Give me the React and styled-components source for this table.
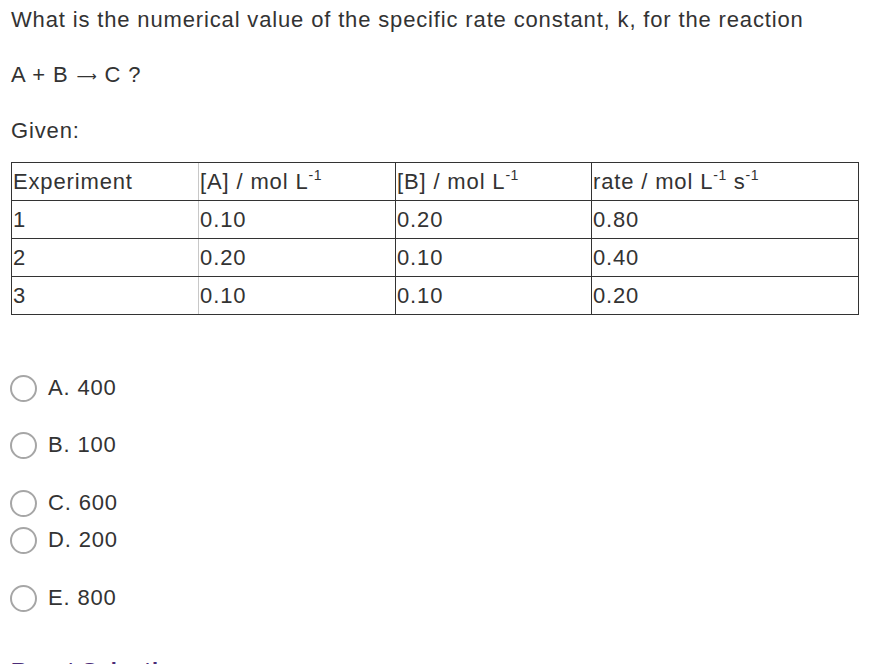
import React from "react";
import styled, { createGlobalStyle } from "styled-components";

const Global = createGlobalStyle`
  body {
    margin: 0;
    background: #fff;
    font-family: "Liberation Sans", Arial, sans-serif;
    color: #333;
  }
`;

const Page = styled.div`
  padding: 8px 0 0 11px;
  width: 848px;
  font-size: 22px;
  letter-spacing: 0.85px;
`;

const Line = styled.p`
  margin: 0 0 ${(p) => p.gap || 31}px 0;
  line-height: 24px;
`;

const Arrow = styled.span`
  font-family: "DejaVu Sans", sans-serif;
  font-size: 14px;
  letter-spacing: 0;
  margin: 0 1px;
  vertical-align: 1px;
`;

const Table = styled.table`
  border-collapse: collapse;
  width: 848px;
  border: 1px solid #333;
  font-size: 22px;
`;

const Cell = styled.td`
  border-top: 1px solid #333;
  border-bottom: 1px solid #333;
  border-left: 1px solid ${(p) => (p.light ? "#c8c8c8" : "#333")};
  width: ${(p) => p.w}px;
  height: 37px;
  padding: 0 0 0 1px;
  line-height: 24px;
  vertical-align: middle;
  text-align: left;
`;

const Sup = styled.sup`
  font-size: 14px;
  line-height: 0;
  vertical-align: 9px;
  letter-spacing: 0.5px;
`;

const Options = styled.div`
  display: flex;
  flex-direction: column;
  margin-top: 60px;
`;

const Option = styled.label`
  display: flex;
  align-items: center;
  gap: 11px;
  height: 26px;
  margin-top: ${(p) => p.gap}px;
  cursor: pointer;
`;

const Radio = styled.span`
  width: 23px;
  height: 23px;
  border: 2px solid #a6a6a6;
  border-radius: 50%;
  flex-shrink: 0;
  margin-left: -1px;
`;

const Reset = styled.a`
  display: block;
  margin-top: 47px;
  font-weight: bold;
  color: #4b2c78;
  text-decoration: none;
`;

const rows = [
  ["1", "0.10", "0.20", "0.80"],
  ["2", "0.20", "0.10", "0.40"],
  ["3", "0.10", "0.10", "0.20"],
];

const widths = [186, 197, 196, 268];

const choices = [
  { label: "A. 400", gap: 0 },
  { label: "B. 100", gap: 31 },
  { label: "C. 600", gap: 32 },
  { label: "D. 200", gap: 11 },
  { label: "E. 800", gap: 32 },
];

const App = () => {
  return (
    <Page>
      <Global />
      <Line>
        What is the numerical value of the specific rate constant, k, for the reaction
      </Line>
      <Line>
        A + B <Arrow>⟶</Arrow> C ?
      </Line>
      <Line gap={19}>Given:</Line>
      <Table>
        <tbody>
          <tr>
            <Cell w={widths[0]}>Experiment</Cell>
            <Cell w={widths[1]} light>
              [A] / mol L<Sup>-1</Sup>
            </Cell>
            <Cell w={widths[2]}>
              [B] / mol L<Sup>-1</Sup>
            </Cell>
            <Cell w={widths[3]}>
              rate / mol L<Sup>-1</Sup> s<Sup>-1</Sup>
            </Cell>
          </tr>
          {rows.map((r, i) => (
            <tr key={i}>
              {r.map((v, j) => (
                <Cell key={j} w={widths[j]} light={j === 1}>
                  {v}
                </Cell>
              ))}
            </tr>
          ))}
        </tbody>
      </Table>
      <Options>
        {choices.map((c) => (
          <Option key={c.label} gap={c.gap}>
            <Radio />
            {c.label}
          </Option>
        ))}
      </Options>
      <Reset href="#">Reset Selection</Reset>
    </Page>
  );
};

export default App;
